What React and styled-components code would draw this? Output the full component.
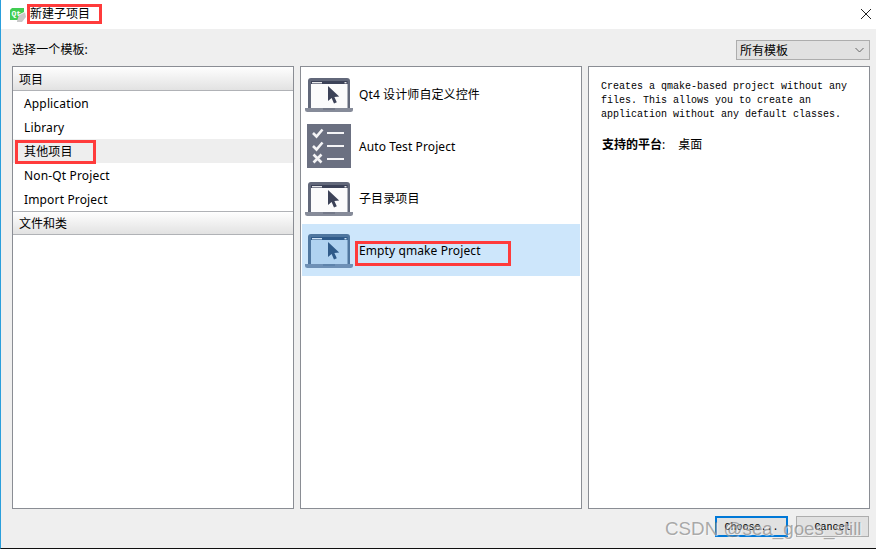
import React from "react";
import styled, { createGlobalStyle } from "styled-components";

const CJK = `"Noto Sans", "Noto Sans CJK SC", sans-serif`;
const MONO = `"Liberation Mono", "Noto Sans CJK SC", monospace`;

const Global = createGlobalStyle`
  html, body { margin: 0; padding: 0; background: #fff; }
  * { box-sizing: border-box; }
`;

const Window = styled.div`
  position: relative;
  width: 876px;
  height: 549px;
  display: flex;
  flex-direction: column;
  overflow: hidden;
  background: #efefef;
  border-left: 1px solid #2a9fdc;
  border-bottom: 1px solid #101010;
  font-family: ${CJK};
  font-size: 12px;
  color: #000;
`;

const TitleBar = styled.header`
  height: 29px;
  flex: none;
  background: #fff;
  display: flex;
  align-items: center;
  padding: 0 5px 0 9px;
`;

const TitleText = styled.span`
  margin-left: 4px;
  font-size: 12px;
  line-height: 14px;
  flex: 1;
  position: relative;
  top: -1px;
`;

const CloseButton = styled.svg`
  width: 10px;
  height: 10px;
  position: relative;
  top: -1px;
`;

const Toolbar = styled.div`
  height: 37px;
  flex: none;
  display: flex;
  align-items: center;
  justify-content: space-between;
  padding: 5px 6px 0 11px;
`;

const TemplateLabel = styled.label`
  font-size: 12px;
  line-height: 14px;
  letter-spacing: 0.1px;
`;

const Combo = styled.div`
  width: 134px;
  height: 20px;
  background: #e1e1e1;
  border: 1px solid #adadad;
  display: flex;
  align-items: center;
  justify-content: space-between;
  padding: 0 5px 0 3px;
  font-size: 12px;
`;

const Chevron = styled.svg`
  width: 9px;
  height: 6px;
`;

const Panels = styled.main`
  height: 443px;
  flex: none;
  display: grid;
  grid-template-columns: 282px 282px 282px;
  column-gap: 6px;
  padding-left: 11px;
`;

const Panel = styled.section`
  background: #fff;
  border: 1px solid #8a8d94;
  min-width: 0;
  overflow: hidden;
`;

const GroupHeader = styled.div`
  height: ${(p) => p.$h}px;
  display: flex;
  align-items: center;
  padding-left: ${(p) => p.$pad}px;
  background: linear-gradient(#fefefe, #e2e2e2);
  border-bottom: 1px solid #b0b2b6;
  border-top: ${(p) => (p.$top ? "1px solid #b0b2b6" : "0")};
  font-size: 12px;
`;

const CategoryRow = styled.div`
  height: 24px;
  display: flex;
  align-items: center;
  padding-left: 11px;
  background: ${(p) => (p.$active ? "#eeeeee" : "#fff")};
  font-size: 12px;
  letter-spacing: 0.15px;
`;

const MiddleList = styled.div`
  padding: 1px;
`;

const TemplateRow = styled.div`
  height: 52px;
  display: flex;
  align-items: center;
  padding-left: 3px;
  background: ${(p) => (p.$active ? "#cde6fb" : "#fff")};
  font-size: 12px;
`;

const TemplateIcon = styled.svg`
  width: 48px;
  height: 44px;
  flex: none;
`;

const TemplateName = styled.span`
  margin-left: 6px;
  letter-spacing: 0.1px;
`;

const Details = styled.div`
  padding: 13px 12px 0;
`;

const Description = styled.p`
  margin: 0;
  font-family: ${MONO};
  font-size: 10px;
  line-height: 14px;
  white-space: pre;
`;

const Platforms = styled.p`
  margin: 15px 0 0 1px;
  font-size: 12px;
  line-height: 16px;
  b { font-weight: 700; }
`;

const PlatformValue = styled.span`
  margin-left: 13px;
`;

const Footer = styled.footer`
  flex: 1;
  display: flex;
  justify-content: flex-end;
  gap: 8px;
  padding: 7px 7px 0 0;
`;

const DialogButton = styled.button`
  width: 73px;
  height: 21px;
  padding: 2px 0 0;
  margin: 0;
  background: #e1e1e1;
  border: ${(p) => (p.$primary ? "2px solid #0078d7" : "1px solid #adadad")};
  font-family: ${MONO};
  font-size: 10px;
  color: #000;
`;

const Annotation = styled.div`
  position: absolute;
  left: ${(p) => p.$x - 1}px;
  top: ${(p) => p.$y}px;
  width: ${(p) => p.$w}px;
  height: ${(p) => p.$h}px;
  border: 3px solid #ff3b3b;
  pointer-events: none;
`;

const Watermark = styled.div`
  position: absolute;
  left: 664px;
  top: 518px;
  font-family: "Liberation Sans", sans-serif;
  font-size: 18.8px;
  line-height: 22px;
  white-space: nowrap;
  color: rgba(120, 120, 120, 0.62);
  text-shadow: 1px 1px 1px rgba(255, 255, 255, 0.6);
  pointer-events: none;
`;

const QtLogo = () => (
  <svg width="16" height="15" viewBox="0 0 16 15" aria-hidden="true">
    <path d="M2 1h12v9l-3 3H0V3z" fill="#41cd52" />
    <text x="1.5" y="9" fontFamily="Liberation Mono, monospace" fontSize="8" fontWeight="700" fill="#fff">Qt</text>
    <path d="M7 14l2-6 6-3 1 5-4 5H7z" fill="#c9c9c9" />
    <path d="M9 8l6-3" stroke="#f4f4f4" strokeWidth="1" />
  </svg>
);

const LaptopIcon = ({ active }) => {
  const body = active ? "#4f769f" : "#62687a";
  const base = active ? "#6e90b6" : "#868b99";
  const bar = active ? "#2f5a89" : "#3c4258";
  const screen = active ? "#b0d2f0" : "#fbfbfc";
  const pointer = active ? "#2f5a89" : "#3c4258";
  const light = active ? "#cfe3f6" : "#e6e7ea";
  return (
    <TemplateIcon viewBox="0 0 48 44" aria-hidden="true">
      <path d="M6 6h36a3 3 0 0 1 3 3v27H3V9a3 3 0 0 1 3-3z" fill={body} />
      <rect x="6" y="9" width="36.5" height="3" fill={bar} />
      <rect x="7" y="10" width="10" height="1.4" fill={light} />
      <rect x="39.5" y="10" width="2" height="1.4" fill={light} />
      <rect x="6" y="12" width="36.5" height="24" fill={screen} />
      <path d="M0 36h48v1.5a2.5 2.5 0 0 1-2.5 2.5H2.5a2.5 2.5 0 0 1-2.5-2.5z" fill={base} />
      <rect x="18" y="36.5" width="12" height="1" fill={body} />
      <path d="M23 14v15l3.6-3 2.4 5.5 2.8-1.2-2.4-5.4 4.8-.4z" fill={pointer} />
    </TemplateIcon>
  );
};

const TestIcon = () => (
  <TemplateIcon viewBox="0 0 48 44" aria-hidden="true">
    <rect x="2" y="0" width="44" height="44" fill="#6b7081" />
    <path d="M8 9l3.5 3.5 6-7M8 22l3.5 3.5 6-7" fill="none" stroke="#f4f4f6" strokeWidth="2.6" />
    <path d="M8.5 30.5l8 8M16.5 30.5l-8 8" fill="none" stroke="#f4f4f6" strokeWidth="2.6" />
    <path d="M22 9h17M22 22h17M22 35h17" fill="none" stroke="#f4f4f6" strokeWidth="2" />
  </TemplateIcon>
);

const categories = ["Application", "Library", "其他项目", "Non-Qt Project", "Import Project"];

export default function App() {
  return (
    <Window>
      <Global />
      <TitleBar>
        <QtLogo />
        <TitleText>新建子项目</TitleText>
        <CloseButton viewBox="0 0 10 10" aria-hidden="true">
          <path d="M0 0l10 10M10 0L0 10" stroke="#222" strokeWidth="1" />
        </CloseButton>
      </TitleBar>
      <Toolbar>
        <TemplateLabel>选择一个模板:</TemplateLabel>
        <Combo>
          <span>所有模板</span>
          <Chevron viewBox="0 0 9 6" aria-hidden="true">
            <path d="M.5 1l4 4 4-4" fill="none" stroke="#666" strokeWidth="1" />
          </Chevron>
        </Combo>
      </Toolbar>
      <Panels>
        <Panel>
          <GroupHeader $h={24} $pad={6}>项目</GroupHeader>
          {categories.map((name) => (
            <CategoryRow key={name} $active={name === "其他项目"}>{name}</CategoryRow>
          ))}
          <GroupHeader $h={24} $pad={6} $top>文件和类</GroupHeader>
        </Panel>
        <Panel>
          <MiddleList>
            <TemplateRow>
              <LaptopIcon />
              <TemplateName>Qt4 设计师自定义控件</TemplateName>
            </TemplateRow>
            <TemplateRow>
              <TestIcon />
              <TemplateName>Auto Test Project</TemplateName>
            </TemplateRow>
            <TemplateRow>
              <LaptopIcon />
              <TemplateName>子目录项目</TemplateName>
            </TemplateRow>
            <TemplateRow $active>
              <LaptopIcon active />
              <TemplateName>Empty qmake Project</TemplateName>
            </TemplateRow>
          </MiddleList>
        </Panel>
        <Panel>
          <Details>
            <Description>{"Creates a qmake-based project without any\nfiles. This allows you to create an\napplication without any default classes."}</Description>
            <Platforms><b>支持的平台</b>:<PlatformValue>桌面</PlatformValue></Platforms>
          </Details>
        </Panel>
      </Panels>
      <Footer>
        <DialogButton $primary>Choose...</DialogButton>
        <DialogButton>Cancel</DialogButton>
      </Footer>
      <Annotation $x={27} $y={4} $w={75} $h={20} />
      <Annotation $x={15} $y={140} $w={81} $h={24} />
      <Annotation $x={355} $y={241} $w={156} $h={25} />
      <Watermark>CSDN @sea_goes_still</Watermark>
    </Window>
  );
}
